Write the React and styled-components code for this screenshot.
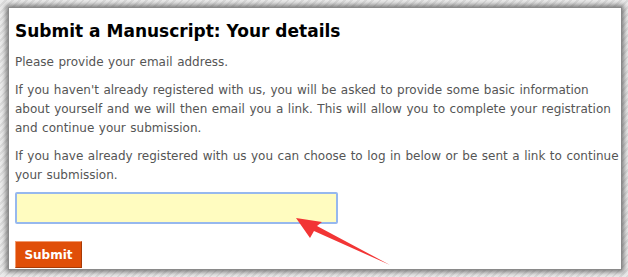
import React from "react";
import styled, { createGlobalStyle } from "styled-components";

const Global = createGlobalStyle`
  html, body { margin: 0; padding: 0; }
  body {
    width: 628px;
    height: 277px;
    overflow: hidden;
    background-color: #e6e6e6;
    background-image: repeating-linear-gradient(
      135deg,
      #ececec 0px,
      #ececec 3px,
      #dcdcdc 3px,
      #dcdcdc 5px
    );
  }
`;

const Stage = styled.div`
  position: relative;
  padding: 8px 7px 8px 9px;
  height: 277px;
  box-sizing: border-box;
`;

const Panel = styled.div`
  background: #fff;
  height: 261px;
  box-sizing: border-box;
  padding: 12px 6px 0 6px;
  box-shadow: 0 0 0 1px #8a8a8a, 0 0 5px 3px rgba(70, 70, 70, 0.7);
  font-family: "DejaVu Sans", Verdana, sans-serif;
  overflow: hidden;
`;

const Title = styled.h1`
  margin: 0 0 11px 0;
  font-size: 17px;
  line-height: 22px;
  font-weight: bold;
  color: #000;
`;

const Para = styled.p`
  margin: 0 0 ${(p) => p.$gap ?? 9}px 0;
  font-size: 12px;
  word-spacing: 0.7px;
  line-height: 19px;
  color: #555;
  white-space: nowrap;
`;

const EmailInput = styled.input`
  display: block;
  box-sizing: border-box;
  width: 323px;
  height: 32px;
  margin: 0 0 17px 0;
  background: #fffcc0;
  border: 2px solid #96b8ee;
  border-radius: 2px;
  outline: none;
`;

const SubmitButton = styled.button`
  display: block;
  box-sizing: border-box;
  width: 67px;
  height: 27px;
  padding: 0;
  background: #e04e08;
  color: #fff;
  font-family: "DejaVu Sans", Verdana, sans-serif;
  font-weight: bold;
  font-size: 12px;
  border: 1px solid;
  border-color: #f29a6e #a83a06 #a83a06 #f29a6e;
`;

const Arrow = styled.svg`
  position: absolute;
  left: 290px;
  top: 210px;
  overflow: visible;
`;

export default function App() {
  return (
    <>
      <Global />
      <Stage>
        <Panel>
          <Title>Submit a Manuscript: Your details</Title>
          <Para>Please provide your email address.</Para>
          <Para>
            If you haven't already registered with us, you will be asked to provide some basic information
            <br />
            about yourself and we will then email you a link. This will allow you to complete your registration
            <br />
            and continue your submission.
          </Para>
          <Para $gap={7}>
            If you have already registered with us you can choose to log in below or be sent a link to continue
            <br />
            your submission.
          </Para>
          <EmailInput type="email" />
          <SubmitButton type="button">Submit</SubmitButton>
        </Panel>
        <Arrow width="110" height="60" viewBox="0 0 110 60">
          <path d="M6 8 L32 12 L27 16 L100 55 L24 21 L20 28 Z" fill="#f23535" />
        </Arrow>
      </Stage>
    </>
  );
}
